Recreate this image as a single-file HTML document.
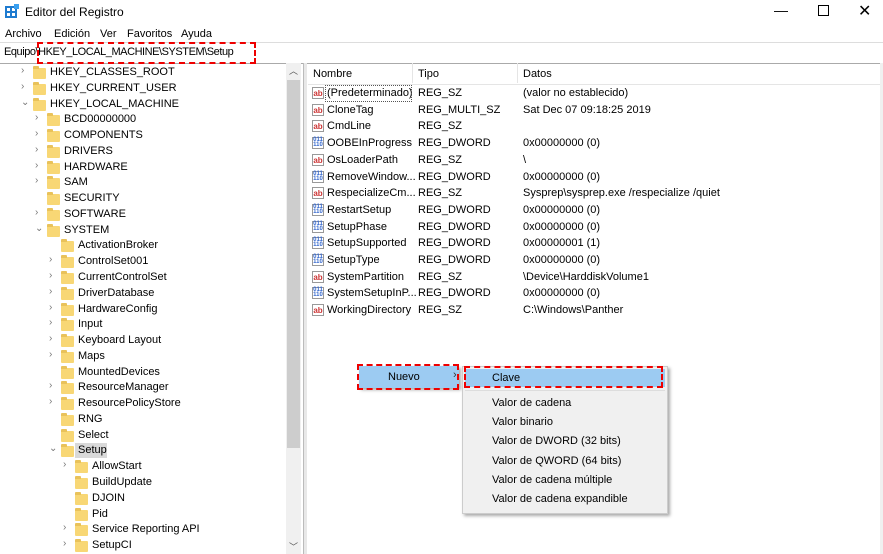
<!DOCTYPE html><html><head><style>
body{margin:0;width:883px;height:554px;overflow:hidden;background:#fff;font-family:"Liberation Sans",sans-serif;font-size:11px;color:#000;position:relative}
.a{position:absolute;white-space:nowrap}
.f{position:absolute;width:13px;height:11px;background:#f8d775;border-radius:1px}
.f:before{content:"";position:absolute;left:0;top:-2px;width:6px;height:3px;background:#e9c25a;border-radius:1px 1px 0 0}
.c{position:absolute;color:#777;font-size:10px}
.ic{position:absolute;width:12px;height:12px;border:1px solid #999;background:#fff;font-size:8px;font-weight:bold;color:#c33;line-height:11px;text-align:center;box-sizing:border-box}
.ic.b{color:#36c;font-size:6px;line-height:5px}
</style></head><body>
<svg class="a" style="left:5px;top:4px" width="14" height="14"><rect x="0" y="2" width="12" height="12" fill="#1e7bd0"/><g fill="#fff"><rect x="2" y="4" width="3" height="3"/><rect x="7" y="4" width="3" height="3"/><rect x="2" y="9" width="3" height="3"/><rect x="7" y="9" width="3" height="3"/></g><rect x="9" y="0" width="5" height="5" fill="#3aa0f0"/></svg>
<div class="a" style="left:25px;top:5px;font-size:12px">Editor del Registro</div>
<div class="a" style="left:774px;top:2px;font-size:14px">—</div>
<div class="a" style="left:818px;top:5px;width:9px;height:9px;border:1px solid #000"></div>
<div class="a" style="left:858px;top:1px;font-size:16px">✕</div>
<div class="a" style="left:5px;top:28px">Archivo</div>
<div class="a" style="left:54px;top:28px">Edición</div>
<div class="a" style="left:100px;top:28px">Ver</div>
<div class="a" style="left:127px;top:28px">Favoritos</div>
<div class="a" style="left:181px;top:28px">Ayuda</div>
<div class="a" style="left:0;top:42px;width:883px;height:20px;border-top:1px solid #ddd;border-bottom:1px solid #aaa"></div>
<div class="a" style="left:4px;top:46px;font-size:11px;letter-spacing:-0.45px">Equipo\HKEY_LOCAL_MACHINE\SYSTEM\Setup</div>
<div class="a" style="left:37px;top:42px;width:215px;height:18px;border:2px dashed #e00"></div>
<div class="a" style="left:286px;top:63px;width:15px;height:491px;background:#f0f0f0"></div>
<div class="a" style="left:287px;top:80px;width:13px;height:368px;background:#cdcdcd"></div>
<div class="a" style="left:289px;top:64px;font-size:9px;color:#555">︿</div>
<div class="a" style="left:289px;top:540px;font-size:9px;color:#555">﹀</div>
<div class="a" style="left:303px;top:63px;width:3px;height:491px;background:#e8e8e8;border-left:1px solid #bbb"></div>
<div id="tree"></div>
<div class="a" style="left:308px;top:62px;width:575px;height:22px;border-bottom:1px solid #e5e5e5"></div>
<div class="a" style="left:412px;top:63px;width:1px;height:20px;background:#e5e5e5"></div>
<div class="a" style="left:517px;top:63px;width:1px;height:20px;background:#e5e5e5"></div>
<div class="a" style="left:313px;top:68px">Nombre</div>
<div class="a" style="left:418px;top:68px">Tipo</div>
<div class="a" style="left:523px;top:68px">Datos</div>
<div id="vals"></div>
<div class="a" style="left:325px;top:85px;width:85px;height:15px;border:1px dotted #555"></div>
<div class="a" style="left:359px;top:366px;width:100px;height:22px;background:#9ccbf2;box-shadow:2px 2px 3px #aaa"></div>
<div class="a" style="left:388px;top:371px">Nuevo</div>
<div class="a" style="left:453px;top:369px;color:#333">›</div>
<div class="a" style="left:357px;top:364px;width:98px;height:22px;border:2px dashed #e00"></div>
<div class="a" style="left:462px;top:366px;width:204px;height:146px;background:#f0f0f0;border:1px solid #ccc;box-shadow:2px 2px 3px #aaa"></div>
<div class="a" style="left:465px;top:369px;width:200px;height:18px;background:#9ccbf2"></div>
<div class="a" style="left:465px;top:390px;width:200px;height:1px;background:#ddd"></div>
<div class="a" style="left:464px;top:366px;width:195px;height:18px;border:2px dashed #e00"></div>
<div class="a" style="left:492px;top:372px">Clave</div>
<div class="a" style="left:492px;top:397px">Valor de cadena</div>
<div class="a" style="left:492px;top:416px">Valor binario</div>
<div class="a" style="left:492px;top:435px">Valor de DWORD (32 bits)</div>
<div class="a" style="left:492px;top:455px">Valor de QWORD (64 bits)</div>
<div class="a" style="left:492px;top:474px">Valor de cadena múltiple</div>
<div class="a" style="left:492px;top:493px">Valor de cadena expandible</div>
<div class="a" style="left:880px;top:63px;width:3px;height:491px;background:#f0f0f0"></div>
<script>
var t=[[0,"HKEY_CLASSES_ROOT",">"],[0,"HKEY_CURRENT_USER",">"],[0,"HKEY_LOCAL_MACHINE","v"],[1,"BCD00000000",">"],[1,"COMPONENTS",">"],[1,"DRIVERS",">"],[1,"HARDWARE",">"],[1,"SAM",">"],[1,"SECURITY",""],[1,"SOFTWARE",">"],[1,"SYSTEM","v"],[2,"ActivationBroker",""],[2,"ControlSet001",">"],[2,"CurrentControlSet",">"],[2,"DriverDatabase",">"],[2,"HardwareConfig",">"],[2,"Input",">"],[2,"Keyboard Layout",">"],[2,"Maps",">"],[2,"MountedDevices",""],[2,"ResourceManager",">"],[2,"ResourcePolicyStore",">"],[2,"RNG",""],[2,"Select",""],[2,"Setup","v"],[3,"AllowStart",">"],[3,"BuildUpdate",""],[3,"DJOIN",""],[3,"Pid",""],[3,"Service Reporting API",">"],[3,"SetupCI",">"]];
var h="";t.forEach(function(r,i){var y=64+i*15.77,x=33+r[0]*14;
if(r[2])h+='<div class="c" style="left:'+(x-12)+'px;top:'+(y+1)+'px">'+(r[2]=="v"?"⌄":"›")+'</div>';
h+='<div class="f" style="left:'+x+'px;top:'+(y+4)+'px"></div>';
if(r[1]=="Setup")h+='<div class="a" style="left:'+(x+14)+'px;top:'+(y+1)+'px;width:32px;height:15px;background:#d9d9d9"></div>';
h+='<div class="a" style="left:'+(x+17)+'px;top:'+(y+2)+'px">'+r[1]+'</div>';});
document.getElementById("tree").innerHTML=h;
var v=[["(Predeterminado)","REG_SZ","(valor no establecido)"],["CloneTag","REG_MULTI_SZ","Sat Dec 07 09:18:25 2019"],["CmdLine","REG_SZ",""],["OOBEInProgress","REG_DWORD","0x00000000 (0)"],["OsLoaderPath","REG_SZ","\\"],["RemoveWindow...","REG_DWORD","0x00000000 (0)"],["RespecializeCm...","REG_SZ","Sysprep\\sysprep.exe /respecialize /quiet"],["RestartSetup","REG_DWORD","0x00000000 (0)"],["SetupPhase","REG_DWORD","0x00000000 (0)"],["SetupSupported","REG_DWORD","0x00000001 (1)"],["SetupType","REG_DWORD","0x00000000 (0)"],["SystemPartition","REG_SZ","\\Device\\HarddiskVolume1"],["SystemSetupInP...","REG_DWORD","0x00000000 (0)"],["WorkingDirectory","REG_SZ","C:\\Windows\\Panther"]];
h="";v.forEach(function(r,i){var y=87+i*16.7,b=r[1]=="REG_DWORD";
h+='<div class="ic'+(b?' b':'')+'" style="left:312px;top:'+(y)+'px">'+(b?'011<br>110':'ab')+'</div>';
h+='<div class="a" style="left:327px;top:'+y+'px">'+r[0]+'</div><div class="a" style="left:418px;top:'+y+'px">'+r[1]+'</div><div class="a" style="left:523px;top:'+y+'px">'+r[2]+'</div>';});
document.getElementById("vals").innerHTML=h;
</script>
</body></html>
